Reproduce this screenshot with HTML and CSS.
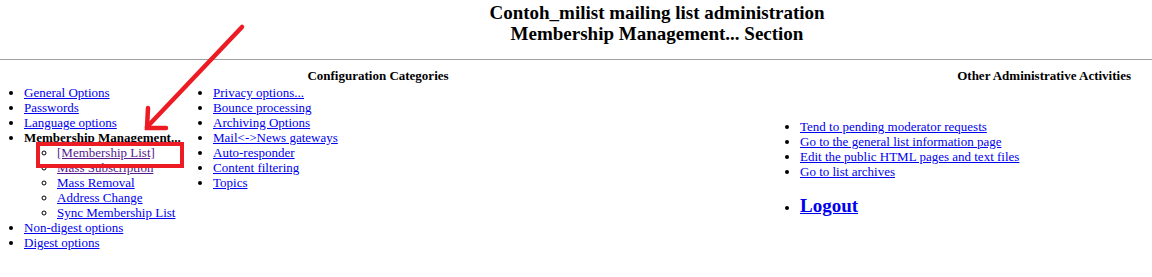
FILE: index.html
```
<!DOCTYPE html>
<html>
<head>
<meta charset="utf-8">
<title>Contoh_milist Administration</title>
<link rel="stylesheet" href="styles.css">
</head>
<body>
<div class="page">
  <h2 class="title">Contoh_milist mailing list administration<br>Membership Management... Section</h2>
  <hr class="rule">
  <div class="main">
    <div class="cats">
      <div class="cat-head">Configuration Categories</div>
      <div class="cat-cols">
        <ul class="list col1">
          <li><a href="#">General Options</a></li>
          <li><a href="#">Passwords</a></li>
          <li><a href="#">Language options</a></li>
          <li><b>Membership Management...</b>
            <ul class="sub">
              <li><a class="visited" href="#">[Membership List]</a></li>
              <li><a class="visited" href="#">Mass Subscription</a></li>
              <li><a href="#">Mass Removal</a></li>
              <li><a href="#">Address Change</a></li>
              <li><a href="#">Sync Membership List</a></li>
            </ul>
          </li>
          <li><a href="#">Non-digest options</a></li>
          <li><a href="#">Digest options</a></li>
        </ul>
        <ul class="list col2">
          <li><a href="#">Privacy options...</a></li>
          <li><a href="#">Bounce processing</a></li>
          <li><a href="#">Archiving Options</a></li>
          <li><a href="#">Mail&lt;-&gt;News gateways</a></li>
          <li><a href="#">Auto-responder</a></li>
          <li><a href="#">Content filtering</a></li>
          <li><a href="#">Topics</a></li>
        </ul>
      </div>
    </div>
    <div class="side">
      <div class="other-head">Other Administrative Activities</div>
      <div class="other">
        <ul class="list olist">
          <li><a href="#">Tend to pending moderator requests</a></li>
          <li><a href="#">Go to the general list information page</a></li>
          <li><a href="#">Edit the public HTML pages and text files</a></li>
          <li><a href="#">Go to list archives</a></li>
        </ul>
        <ul class="list logout">
          <li><a class="big" href="#">Logout</a></li>
        </ul>
      </div>
    </div>
  </div>
  <div class="markbox"></div>
  <svg class="arrow" width="1152" height="277" viewBox="0 0 1152 277">
    <polyline points="242,27 147,127" fill="none" stroke="#ed1c24" stroke-width="4.5" stroke-linecap="round"/>
    <polyline points="148,108 147,128 166,128" fill="none" stroke="#ed1c24" stroke-width="4.5" stroke-linecap="round" stroke-linejoin="miter"/>
  </svg>
</div>
</body>
</html>
```
FILE: styles.css
```
html, body {
  margin: 0;
  padding: 0;
  background: #ffffff;
}
body {
  font-family: "Liberation Serif", "Times New Roman", serif;
  font-size: 13px;
  line-height: 15px;
  color: #000000;
}
.page {
  position: relative;
  width: 1152px;
  height: 277px;
  overflow: hidden;
}
.title {
  margin: 0;
  padding-top: 2px;
  padding-left: 162px;
  text-align: center;
  font-size: 19px;
  line-height: 21px;
  font-weight: bold;
}
.rule {
  margin: 15px 0 0 0;
  border: 0;
  height: 1px;
  background: #a0a0a0;
}
a {
  color: #0000ee;
  text-decoration: underline;
}
a.visited {
  color: #551a8b;
}
.main {
  display: grid;
  grid-template-columns: 756px 1fr;
  align-items: start;
  margin-top: 8px;
}
.cat-head {
  text-align: center;
  font-weight: bold;
}
.cat-cols {
  display: flex;
  margin-top: 2px;
}
.list {
  margin: 0;
  padding: 0;
  list-style-type: disc;
}
.col1 {
  width: 165px;
  padding-left: 24px;
}
.col2 {
  padding-left: 24px;
}
.sub {
  margin: 0;
  padding-left: 33px;
  list-style-type: circle;
}
.other-head {
  text-align: right;
  padding-right: 21px;
  font-weight: bold;
}
.other {
  margin-top: 36px;
  padding-left: 44px;
}
.logout {
  margin-top: 16px;
  line-height: 22px;
}
.big {
  font-size: 19px;
  font-weight: bold;
}
.markbox {
  position: absolute;
  left: 36px;
  top: 142px;
  width: 140px;
  height: 18px;
  border: 4px solid #ed1c24;
}
.arrow {
  position: absolute;
  left: 0;
  top: 0;
  pointer-events: none;
}
```
